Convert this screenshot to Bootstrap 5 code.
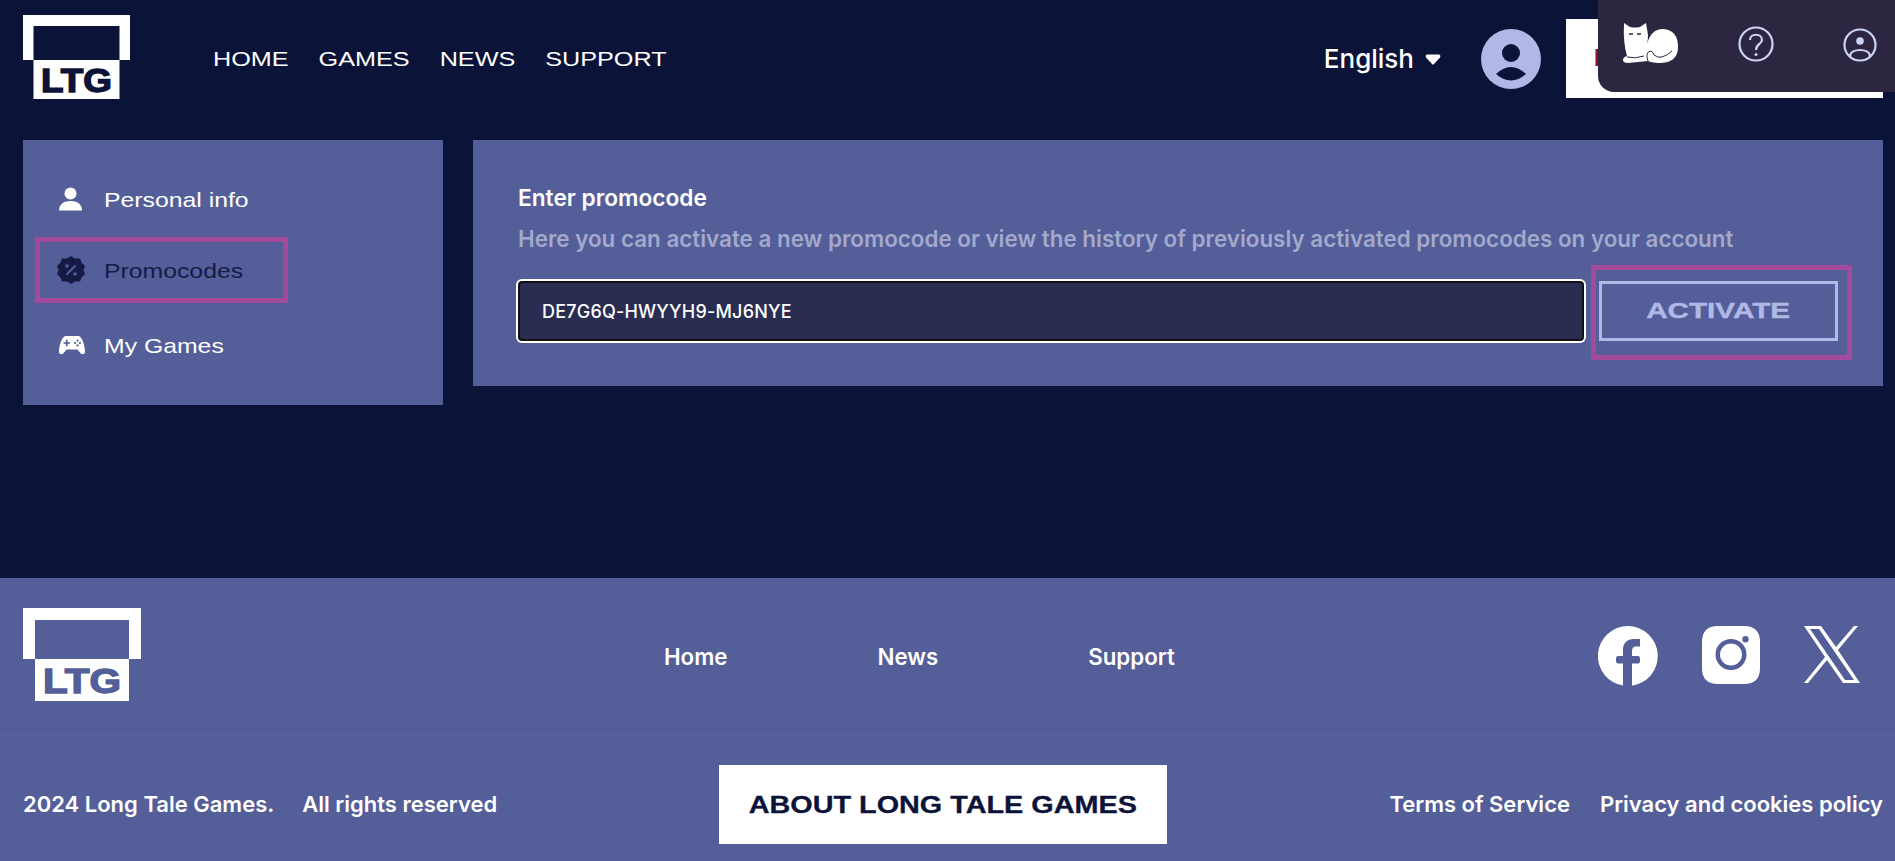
<!DOCTYPE html>
<html lang="en">
<head>
<meta charset="utf-8">
<title>Promocodes</title>
<link href="https://cdn.jsdelivr.net/npm/bootstrap@5.3.0/dist/css/bootstrap.min.css" rel="stylesheet">
<style>
:root{--ink:#0b1339;--panel:#545e99;--hot:#a34a9c;--soft:#b1b8e6;}
html,body{height:100%;}
body{background:var(--ink);color:#fff;font-family:"Inter","Noto Sans",sans-serif;overflow:hidden;}
a{color:inherit;text-decoration:none;}
.shell{height:861px;position:relative;}
.top-bar{height:116px;padding:0 12px 0 23px;}
.logo-top{width:107px;height:84px;display:block;margin:-2px 83px 0 0;}
.logo-txt{font-family:"Liberation Sans",sans-serif;font-weight:700;}
.logo-foot{width:118px;height:93px;display:block;}
.wide{font-family:"Liberation Sans",sans-serif;white-space:nowrap;}
.top-links{gap:25px;font-size:21px;transform:scaleX(1.2);transform-origin:left center;margin-top:2px;}
.lang{font-size:26px;font-weight:500;margin-right:40px;}
.lang-caret{margin-left:11px;margin-top:2px;}
.avatar{width:60px;height:60px;margin:2px 25px 0 0;display:block;}
.login-box{width:317px;height:79px;background:#fff;color:#8a1230;font-weight:700;font-size:23px;padding-left:28px;}
.ext-bar{position:absolute;top:0;right:0;width:297px;height:92px;background:#2d2640;border-bottom-left-radius:16px;}
.ext-cat{position:absolute;left:25px;top:23px;width:55px;height:40px;}
.ext-help{position:absolute;left:140px;top:26px;width:36px;height:36px;}
.ext-user{position:absolute;left:245px;top:28px;width:34px;height:34px;}
.page-body{padding:24px 12px 0 23px;gap:30px;}
.side-box{width:420px;height:265px;background:var(--panel);padding:26px 0 0 12px;}
.side-item{width:253px;height:66px;border:5px solid transparent;padding-left:19px;font-size:21px;}
.side-item.on{border-color:var(--hot);color:#171a45;}
.side-item+.side-item{margin-top:5px;}
.side-item:last-child{margin-top:9px;}
.side-ico{width:28px;height:28px;margin-right:17px;flex:none;overflow:visible;}
.side-label{display:inline-block;transform:scaleX(1.18);transform-origin:left center;margin-top:2px;}
.promo-box{background:var(--panel);width:1410px;height:246px;padding:45px 31px 0 43px;}
.promo-title{font-size:22.7px;font-weight:600;line-height:26px;margin:0 0 15px;padding-left:2px;}
.promo-note{font-size:22.4px;font-weight:600;color:#a3a9cc;line-height:26px;margin:0;padding-left:2px;white-space:nowrap;}
.promo-row{margin-top:13px;}
.code-field{width:1066px;height:60px;background:#292d52;border:2px solid #111;box-shadow:0 0 0 2px #fff;border-radius:4px;color:#fff;padding:0 0 0 22px;font-size:18px;letter-spacing:.2px;font-weight:500;margin:16px 7px 0 2px;flex:none;}
.code-field:focus{background:#292d52;color:#fff;border-color:#111;box-shadow:0 0 0 2px #fff;}
.act-wrap{width:261px;height:95px;border:5px solid var(--hot);padding:11px 9px 0 3px;flex:none;}
.act-btn{width:239px;height:60px;border:3px solid var(--soft);background:transparent;color:var(--soft);font-weight:700;font-size:22.3px;padding:0;border-radius:0;-webkit-text-stroke:.4px var(--soft);}
.act-btn span{display:inline-block;transform:scaleX(1.33);}
.foot{background:var(--panel);height:283px;margin-top:auto;}
.foot-top{height:157px;padding:30px 35px 0 23px;border-bottom:1px solid #5f60a8;}
.foot-nav{margin-left:523px;padding-top:32px;gap:150px;font-size:22.3px;font-weight:600;}
.socials{margin-left:auto;gap:44px;padding-top:18px;}
.foot-low{height:126px;padding:13px 12px 0 23px;font-size:22px;font-weight:600;}
.about{width:448px;height:79px;background:#fff;color:var(--ink);font-weight:700;font-size:24px;margin:0 auto;-webkit-text-stroke:.3px var(--ink);}
.about span{display:inline-block;transform:scaleX(1.2);}
.low-gap-a{gap:28px;}
.low-gap-b{gap:30px;}
</style>
</head>
<body>
<div class="shell d-flex flex-column">
  <header class="top-bar d-flex align-items-center">
    <a href="#"><svg class="logo-top" viewBox="0 0 107 84"><path fill="#fff" fill-rule="evenodd" d="M0 0H107V45H96.500V84H10.500V45H0ZM10.500 11V45H96.500V11Z"/><text class="logo-txt" x="53.500" y="77" text-anchor="middle" font-size="33" textLength="71" lengthAdjust="spacingAndGlyphs" fill="#0b1339" stroke="#0b1339" stroke-width="1.400">LTG</text></svg></a>
    <nav class="top-links wide d-flex"><a href="#">HOME</a><a href="#">GAMES</a><a href="#">NEWS</a><a href="#">SUPPORT</a></nav>
    <div class="ms-auto d-flex align-items-center">
      <div class="lang d-flex align-items-center">English<svg class="lang-caret" width="16" height="13" viewBox="0 0 16 13"><path fill="#fff" d="M2 1.500H14Q16 2 15 4.500L9 11Q8 12 7 11L1 4.500Q0 2 2 1.500Z"/></svg></div>
      <svg class="avatar" viewBox="0 0 60 60"><circle cx="30" cy="30" r="30" fill="#b1b8e6"/><ellipse cx="30" cy="24" rx="9" ry="9" fill="#0b1339"/><path fill="#0b1339" d="M15 45Q30 31 45 45Q30 58 15 45Z"/></svg>
      <div class="login-box d-flex align-items-center">LOG OUT</div>
    </div>
  </header>

  <div class="ext-bar">
    <svg class="ext-cat" viewBox="0 0 55 40"><path fill="#fff" d="M1 0L7 4Q12 5 17 4L23 0L25 12Q25 18 24 21Q28 6 40 6Q55 7 55 24Q55 39 38 40Q30 40 25 38L5 40Q0 40 0 37Q0 34 4 33Q0 20 1 0Z"/><path stroke="#2d2640" stroke-width="1.600" d="M6 11H10M14 11H18"/><path fill="none" stroke="#2d2640" stroke-width="1" d="M25 38Q22 30 27 28Q30 28 31 32Q38 38 49 28M4 34Q12 36 21 33"/></svg>
    <svg class="ext-help" viewBox="0 0 36 36" fill="none" stroke="#cdd5f7" stroke-width="2.200"><circle cx="18" cy="18" r="16.500"/><path d="M12 14C12 7 24 7 24 14C24 18 18 18 18 24"/><circle cx="18" cy="28.500" r="1.500" fill="#cdd5f7" stroke="none"/></svg>
    <svg class="ext-user" viewBox="0 0 34 34" fill="none" stroke="#cdd5f7" stroke-width="2.200"><circle cx="17" cy="17" r="15.500"/><circle cx="17" cy="13" r="3.800" fill="#cdd5f7" stroke="none"/><path d="M7 28C8 20 26 20 27 28"/></svg>
  </div>

  <main class="page-body d-flex align-items-start">
    <aside class="side-box">
      <a href="#" class="side-item wide d-flex align-items-center">
        <svg class="side-ico" viewBox="0 0 28 28"><circle cx="11.500" cy="8.500" r="6" fill="#fff"/><path fill="#fff" d="M0 25.500C0 19 5 16 11.500 16C18 16 23 19 23 25.500Z"/></svg><span class="side-label">Personal info</span></a>
      <a href="#" class="side-item on wide d-flex align-items-center">
        <svg class="side-ico" viewBox="0 0 28 28"><path fill="#171a45" d="M12 0L16 2.500L21 2.500L22.500 6.500L26 10L24.500 14L26 18L22.500 21.500L21 25.500L16 25.500L12 28L8 25.500L3 25.500L1.500 21.500L-2 18L-.5 14L-2 10L1.500 6.500L3 2.500L8 2.500Z"/><path stroke="#545e99" stroke-width="2" d="M16.500 9.500L7.500 18.500"/><circle cx="8" cy="10" r="1.800" fill="#545e99"/><circle cx="16" cy="18" r="1.800" fill="#545e99"/></svg><span class="side-label">Promocodes</span></a>
      <a href="#" class="side-item wide d-flex align-items-center">
        <svg class="side-ico" viewBox="0 0 28 28"><path fill="#fff" d="M6.500 5H19.500C23 5 26 15 26 20.500C26 24 22.500 24 20.500 21L18.500 18.500H7.500L5.500 21C3.500 24 0 24 0 20.500C0 15 3 5 6.500 5Z"/><path stroke="#545e99" stroke-width="1.700" d="M4.500 12H11M7.750 8.800V15.200"/><circle cx="18.500" cy="9.600" r="1.100" fill="#545e99"/><circle cx="18.500" cy="14.400" r="1.100" fill="#545e99"/><circle cx="16.100" cy="12" r="1.100" fill="#545e99"/><circle cx="20.900" cy="12" r="1.100" fill="#545e99"/></svg><span class="side-label">My Games</span></a>
    </aside>
    <section class="promo-box">
      <h2 class="promo-title">Enter promocode</h2>
      <p class="promo-note">Here you can activate a new promocode or view the history of previously activated promocodes on your account</p>
      <div class="d-flex align-items-start promo-row">
        <input class="code-field form-control" value="DE7G6Q-HWYYH9-MJ6NYE">
        <div class="act-wrap"><button class="act-btn btn wide"><span>ACTIVATE</span></button></div>
      </div>
    </section>
  </main>

  <footer class="foot">
    <div class="foot-top d-flex align-items-start">
      <svg class="logo-foot" viewBox="0 0 118 93"><path fill="#fff" fill-rule="evenodd" d="M0 0H118V51H106V93H12V51H0ZM12 12V51H106V12Z"/><text class="logo-txt" x="59" y="84.500" text-anchor="middle" font-size="35" textLength="78" lengthAdjust="spacingAndGlyphs" fill="#545e99" stroke="#545e99" stroke-width="1.400">LTG</text></svg>
      <nav class="foot-nav d-flex"><a href="#">Home</a><a href="#">News</a><a href="#">Support</a></nav>
      <div class="socials d-flex">
        <svg width="60" height="60" viewBox="0 0 60 60"><path fill="#fff" d="M30 0A30 30 0 0 1 34 59.700V37.500H40Q42 37.500 42 34.500V33Q42 30 40 30H34V25Q34 20.500 38 20.500H42V13H36C29 13 25 17 25 24V30H20Q18 30 18 33V34.500Q18 37.500 20 37.500H25V59.600A30 30 0 0 1 30 0Z"/></svg>
        <svg width="58" height="58" viewBox="0 0 58 58"><path fill="#fff" fill-rule="evenodd" d="M16 0H42Q58 0 58 16V42Q58 58 42 58H16Q0 58 0 42V16Q0 0 16 0ZM29 13A15.500 15.500 0 1 0 29 44A15.500 15.500 0 1 0 29 13ZM29 17.500A11 11 0 1 1 29 39.500A11 11 0 1 1 29 17.500ZM43.500 10.100A3.200 3.200 0 1 0 43.500 16.500A3.200 3.200 0 1 0 43.500 10.100Z"/></svg>
        <svg width="56" height="57" viewBox="0 0 56 57"><path fill="#fff" fill-rule="evenodd" d="M0 0H17L32 21L50 0H54L34 24L56 57H39L23 34L4 57H0L21 31ZM6 3L41 54H50L15 3Z"/></svg>
      </div>
    </div>
    <div class="foot-low d-flex align-items-center">
      <div class="d-flex low-gap-a"><span>2024 Long Tale Games.</span><span>All rights reserved</span></div>
      <a href="#" class="about wide d-flex align-items-center justify-content-center"><span>ABOUT LONG TALE GAMES</span></a>
      <div class="d-flex low-gap-b"><a href="#">Terms of Service</a><a href="#">Privacy and cookies policy</a></div>
    </div>
  </footer>
</div>
</body>
</html>
